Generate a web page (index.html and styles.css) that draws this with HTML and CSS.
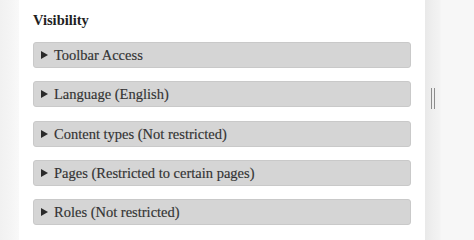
FILE: index.html
```html
<!DOCTYPE html>
<html>
<head>
<meta charset="utf-8">
<link rel="stylesheet" href="styles.css">
</head>
<body>
<div class="page">
  <div class="gutter-left"></div>
  <div class="panel">
    <h2 class="title">Visibility</h2>
    <div class="list">
      <div class="item"><span class="arrow"></span>Toolbar Access</div>
      <div class="item"><span class="arrow"></span>Language (English)</div>
      <div class="item"><span class="arrow"></span>Content types (Not restricted)</div>
      <div class="item"><span class="arrow"></span>Pages (Restricted to certain pages)</div>
      <div class="item"><span class="arrow"></span>Roles (Not restricted)</div>
    </div>
  </div>
  <div class="gutter-right">
    <div class="handle"></div>
  </div>
</div>
</body>
</html>
```
FILE: styles.css
```css
html, body {
  margin: 0;
  padding: 0;
  background: #f6f6f6;
}
.page {
  display: flex;
  width: 474px;
  height: 240px;
  font-family: "Liberation Serif", "Times New Roman", serif;
}
.gutter-left {
  width: 19px;
  background: linear-gradient(to right, #f1f1f1, #f5f5f5 60%, #f9f9f9);
}
.panel {
  width: 378px;
  padding: 0 14px;
  background: #ffffff;
  display: flex;
  flex-direction: column;
}
.title {
  margin: 12px 0 13px;
  font-size: 14.5px;
  line-height: 17px;
  font-weight: bold;
  color: #1f1f1f;
}
.list {
  display: flex;
  flex-direction: column;
  gap: 13.25px;
}
.item {
  display: flex;
  align-items: center;
  height: 24px;
  line-height: 24px;
  padding-left: 7px;
  border: 1px solid #c9c9c9;
  border-radius: 3px;
  background: #d5d5d5;
  font-size: 14.5px;
  color: #333333;
  -webkit-text-stroke: 0.15px #333333;
}
.arrow {
  width: 0;
  height: 0;
  border-top: 4px solid transparent;
  border-bottom: 4px solid transparent;
  border-left: 7px solid #2a2a2a;
  margin-right: 6px;
}
.gutter-right {
  flex: 1;
  background: linear-gradient(to right, #e9e9e9, #efefef 8px, #f3f3f3 15px, #f7f7f7 16px, #f7f7f7);
  padding: 88px 0 0 6px;
}
.handle {
  width: 2px;
  height: 21px;
  border-left: 1px solid #8c8c8c;
  border-right: 1px solid #8c8c8c;
}
```
